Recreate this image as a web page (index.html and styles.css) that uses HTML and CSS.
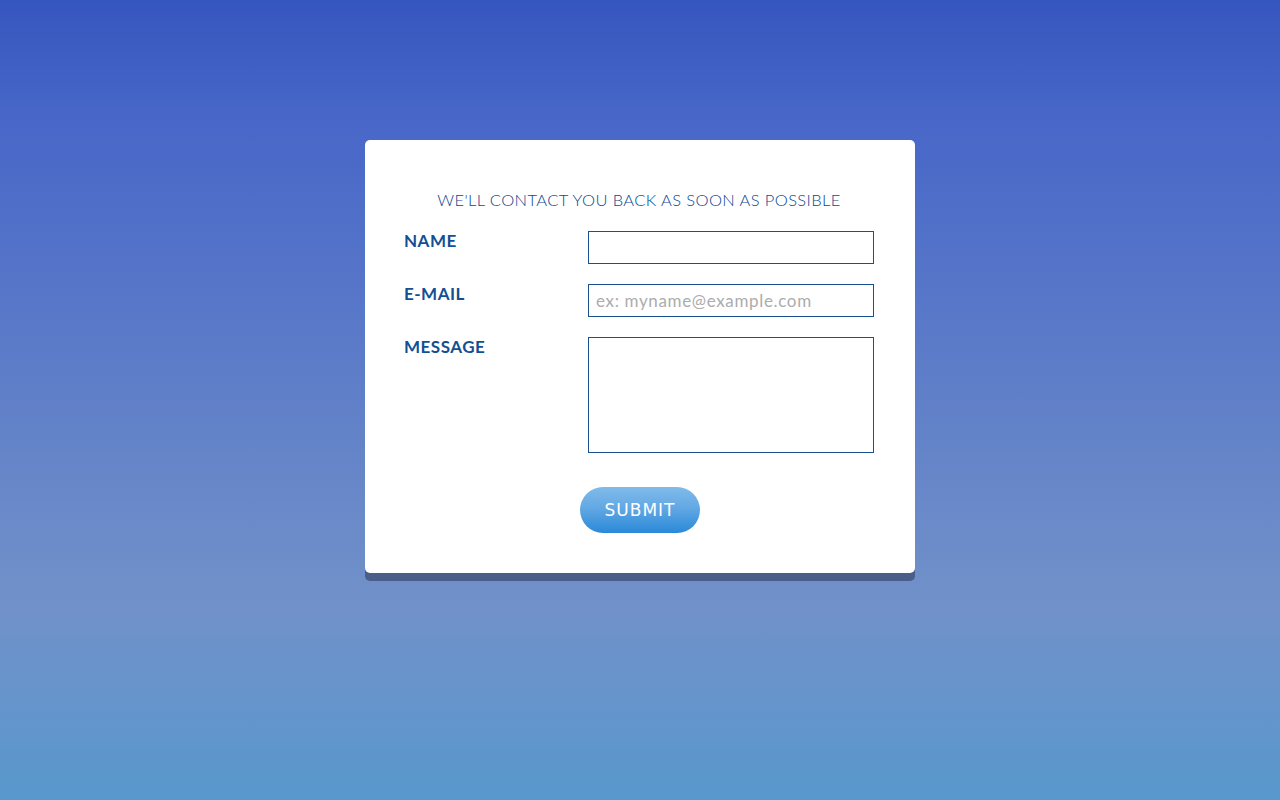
FILE: index.html
```html
<!DOCTYPE html>
<html>
<head>
<meta charset="utf-8">
<link rel="stylesheet" href="styles.css">
</head>
<body>
<div class="page">
  <form class="card">
    <h1 class="title">WE'LL CONTACT YOU BACK AS SOON AS POSSIBLE</h1>
    <div class="row">
      <label class="label">NAME</label>
      <input class="field" type="text">
    </div>
    <div class="row">
      <label class="label">E-MAIL</label>
      <input class="field" type="text" placeholder="ex: myname@example.com">
    </div>
    <div class="row">
      <label class="label">MESSAGE</label>
      <textarea class="field area"></textarea>
    </div>
    <div class="actions">
      <button class="submit" type="button">SUBMIT</button>
    </div>
  </form>
</div>
</body>
</html>
```
FILE: styles.css
```css
html, body {
  margin: 0;
  padding: 0;
  height: 100%;
}
body {
  background: linear-gradient(to bottom, #3656bf 0%, #4766c8 14%, #6f8fc9 72%, #7191ca 76%, #5898cc 100%);
  font-family: Lato, "Open Sans", sans-serif;
}
.page {
  height: 800px;
  display: flex;
  justify-content: center;
  padding-top: 140px;
  box-sizing: border-box;
}
.card {
  width: 550px;
  height: 433px;
  box-sizing: border-box;
  background: #fff;
  border-radius: 5px;
  box-shadow: 0 8px 0 #4a5e8a;
  padding: 49px 41px 0 39px;
}
.title {
  margin: 0 0 20px;
  text-align: center;
  font-family: Lato, sans-serif;
  font-weight: 300;
  font-size: 16.5px;
  letter-spacing: 0.38px;
  color: #0c4791;
  line-height: 22px;
}
.row {
  display: flex;
  margin-bottom: 20px;
}
.label {
  width: 184px;
  flex: none;
  font-family: Lato, sans-serif;
  font-weight: 700;
  font-size: 17px;
  letter-spacing: 0.5px;
  color: #124f93;
  line-height: 20px;
}
.field {
  width: 286px;
  height: 33px;
  box-sizing: border-box;
  border: 1px solid #1a5090;
  border-radius: 0;
  margin: 0;
  padding: 0 7px;
  font-family: Lato, sans-serif;
  font-weight: 400;
  font-size: 17px;
  letter-spacing: 0.65px;
  color: #333;
  outline: none;
}
.field::placeholder {
  color: #acacac;
}
.area {
  height: 116px;
  resize: none;
}
.actions {
  display: flex;
  justify-content: center;
  padding-top: 14px;
  padding-left: 2px;
}
.submit {
  width: 120px;
  height: 46px;
  border: none;
  border-radius: 23px;
  background: linear-gradient(to bottom, #80bbe9 0%, #63a8e4 45%, #2a89d8 100%);
  color: #fff;
  font-family: "DejaVu Sans", sans-serif;
  font-size: 17px;
  letter-spacing: 1px;
  padding: 0;
  cursor: pointer;
}
```
